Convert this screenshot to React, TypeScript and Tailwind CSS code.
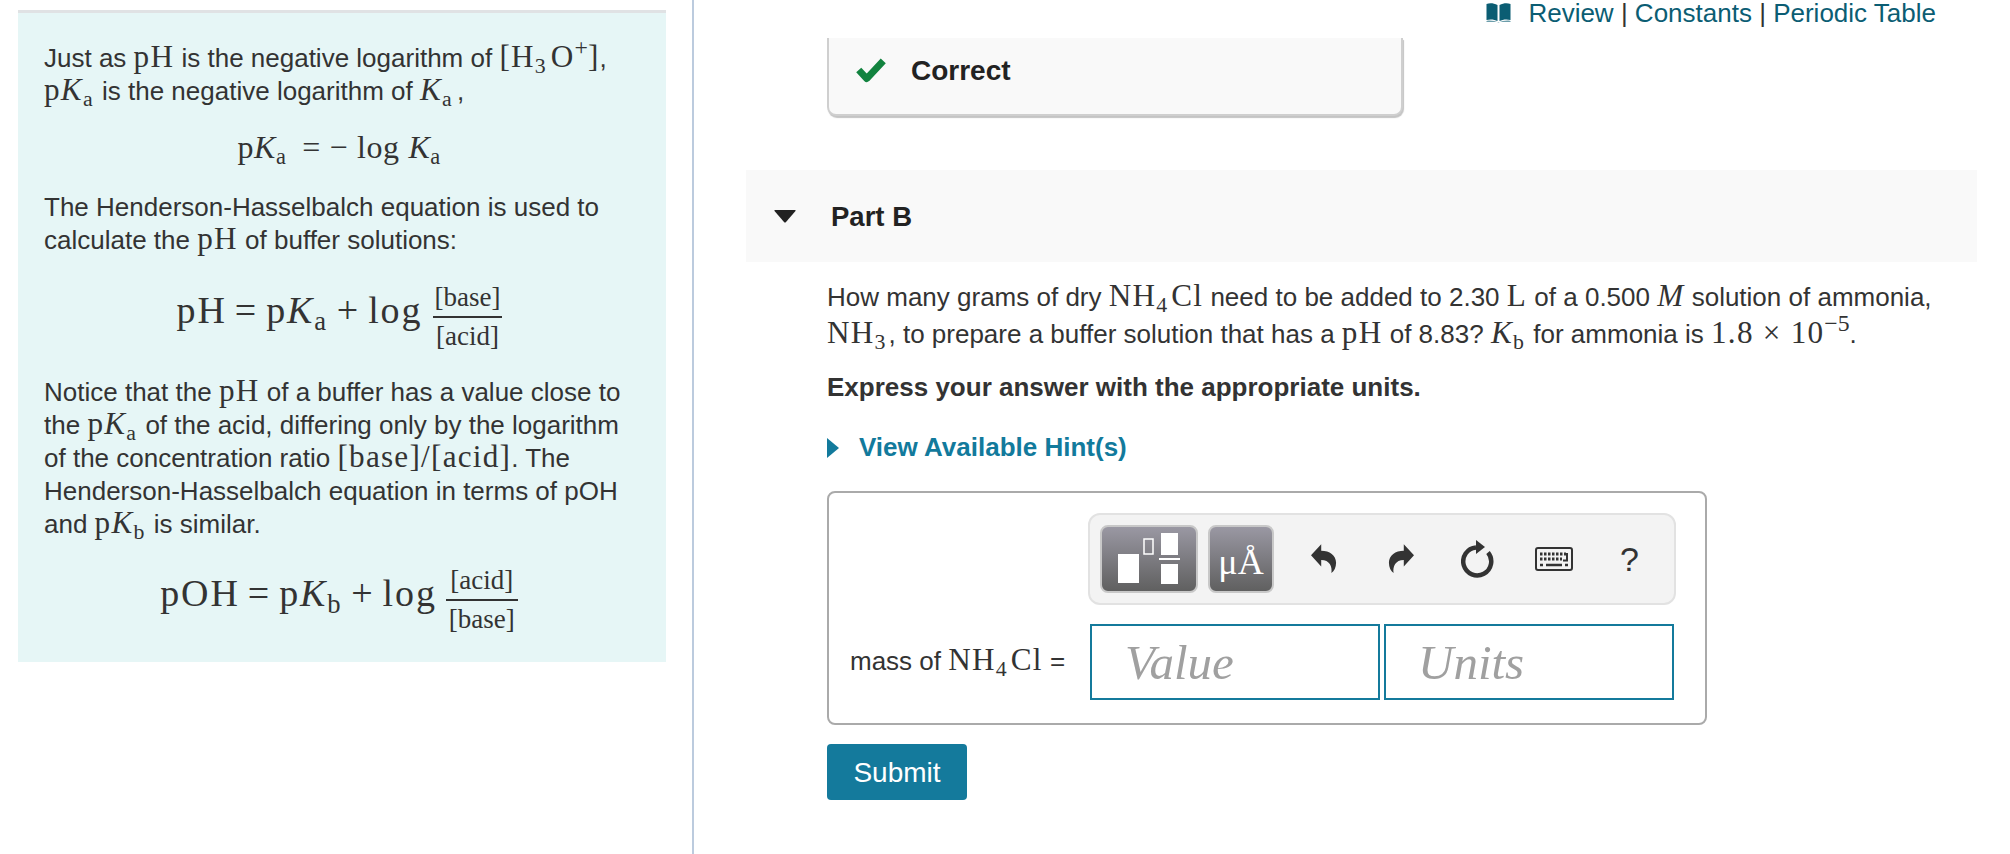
import React from "react";

const Sub = ({ children }: { children: React.ReactNode }) => (
  <span className="relative top-[0.26em] text-[0.7em] leading-none tracking-normal">{children}</span>
);
const Sup = ({ children }: { children: React.ReactNode }) => (
  <span className="relative -top-[0.5em] text-[0.76em] leading-none tracking-normal">{children}</span>
);
const M = ({ children }: { children: React.ReactNode }) => (
  <span className="font-['Liberation_Serif',serif] text-[1.2em] tracking-[0.04em] leading-[0.8]">{children}</span>
);
const K = ({ s }: { s: string }) => (
  <>
    <i className="font-medium">K</i>
    <span className="relative top-[0.26em] text-[0.7em] leading-none tracking-normal mr-[0.1em]">{s}</span>
  </>
);
const Frac = ({ a, b }: { a: string; b: string }) => (
  <span className="inline-flex flex-col items-center text-[27px] leading-[30px] ml-[9px] tracking-normal">
    <span className="px-[3px] pb-[4px]">{a}</span>
    <span className="px-[3px] pt-[3px] border-t-2 border-[#333]">{b}</span>
  </span>
);
const Op = ({ children }: { children: React.ReactNode }) => <span className="mx-[8px]">{children}</span>;

const Book = () => (
  <svg width="25" height="20" viewBox="0 0 24 20" fill="#0b5d73">
    <path d="M0 1c3-1 7-1 11 1v16c-3-1.500-7-2-11-1zM24 1c-3-1-7-1-11 1v16c3-1.500 7-2 11-1z" />
    <path d="M0 18c4-1 8 0 12 1.500 4-1.500 8-2.500 12-1.500v1H0z" opacity=".6" />
  </svg>
);
const Arrow = ({ flip }: { flip?: boolean }) => (
  <svg width="28" height="32" viewBox="0 0 28 32" fill="#333" className={flip ? "-scale-x-100" : ""}>
    <path d="M0 12 11 0V7C20 7 27 12 27 20 27 25 25 29 22 31 23 24 20 17 11 17V24Z" />
  </svg>
);
const Reset = () => (
  <svg width="34" height="38" viewBox="0 0 34 38" fill="none">
    <path d="M15 7.500A14 14 0 1 0 27 12.500" stroke="#333" strokeWidth="4.500" />
    <path d="M15 0 24 7 15 14Z" fill="#333" />
  </svg>
);
const Keyboard = () => (
  <svg width="38" height="24" viewBox="0 0 38 24" fill="none">
    <rect x="1" y="1" width="36" height="22" rx="2" stroke="#333" strokeWidth="2" />
    <path d="M5 7h26M5 12h22" stroke="#333" strokeWidth="3" strokeDasharray="2.500 1.500" />
    <path d="M32 6v7.500h-4" stroke="#333" strokeWidth="2" />
    <path d="M5 18h3M11 18h16M30 18h3" stroke="#333" strokeWidth="2.500" />
  </svg>
);

export default function App() {
  return (
    <div className="flex w-[2010px] h-[854px] overflow-hidden bg-white text-[#333] font-['Liberation_Sans',Arial,sans-serif] text-[26px] leading-[33px]">
      {/* left column */}
      <div className="w-[694px] shrink-0 border-r-2 border-[#bccbde] pl-[18px] pt-[10px]">
        <div className="w-[648px] h-[652px] bg-[#e6f6f6] border-t-[3px] border-[#e0e2e4] px-[26px] pt-[29px]">
          <p className="whitespace-nowrap">
            Just as <M>pH</M> is the negative logarithm of <M>[H<Sub>3</Sub><span className="ml-[5px]">O</span><Sup>+</Sup>]</M>,<br />
            <M>p<K s="a" /></M> is the negative logarithm of <M><K s="a" /></M><span className="ml-[3px]">,</span>
          </p>
          <div className="text-center text-[32px] tracking-[0.02em] leading-[33px] mt-[23px] font-['Liberation_Serif',serif] pr-[4px]">
            p<K s="a" /><span className="ml-[14px]">=</span> − log <K s="a" />
          </div>
          <p className="mt-[27px] whitespace-nowrap">
            The Henderson-Hasselbalch equation is used to<br />
            calculate the <M>pH</M> of buffer solutions:
          </p>
          <div className="flex items-center justify-center h-[70px] text-[38px] tracking-[0.05em] mt-[24px] font-['Liberation_Serif',serif] pr-[4px]">
            <span className="pb-[10px] whitespace-nowrap">pH<Op>=</Op>p<K s="a" /><Op>+</Op>log</span>
            <Frac a="[base]" b="[acid]" />
          </div>
          <p className="mt-[25px] whitespace-nowrap">
            Notice that the <M>pH</M> of a buffer has a value close to<br />
            the <M>p<K s="a" /></M> of the acid, differing only by the logarithm<br />
            of the concentration ratio <M>[base]/[acid]</M>. The<br />
            Henderson-Hasselbalch equation in terms of pOH<br />
            and <M>p<K s="b" /></M> is similar.
          </p>
          <div className="flex items-center justify-center h-[70px] text-[38px] tracking-[0.05em] mt-[23px] font-['Liberation_Serif',serif] pr-[6px]">
            <span className="pb-[10px] whitespace-nowrap">pOH<Op>=</Op>p<K s="b" /><Op>+</Op>log</span>
            <Frac a="[acid]" b="[base]" />
          </div>
        </div>
      </div>

      {/* right column */}
      <div className="flex-1 pl-[52px] pr-[33px]">
        <div className="h-[38px] flex justify-end items-start gap-[17px] pr-[41px] text-[#0b5d73] leading-[26px]">
          <span className="mt-[3px]"><Book /></span>
          <span>
            Review <span className="text-[#333]">|</span> Constants <span className="text-[#333]">|</span> Periodic Table
          </span>
        </div>

        <div className="ml-[81px] w-[576px] h-[78px] bg-[#f9f9f9] border-x-2 border-b-2 border-[#cfcfcf] rounded-b-[9px] shadow-[1px_2px_1px_#c4c4c4] flex items-center pl-[26px] gap-[24px] font-bold text-[#222] text-[28px] pb-[12px]">
          <svg width="32" height="26" viewBox="0 0 30 24" fill="none">
            <path d="M3.500 12 11 20 26.500 3.500" stroke="#12833f" strokeWidth="6.500" strokeLinejoin="round" />
          </svg>
          Correct
        </div>

        <div className="mt-[54px] h-[92px] bg-[#f9f9f9] flex items-center pl-[28px] gap-[35px] font-bold text-[#222] text-[27.500px]">
          <svg width="22" height="13" viewBox="0 0 22 13" fill="#222"><path d="M1 0h20q1 0 .5 1L12 12q-1 1-2 0L.5 1Q0 0 1 0z" /></svg>
          Part B
        </div>

        <div className="ml-[81px] w-[890px]">
          <p className="mt-[17px] leading-[37px] whitespace-nowrap">
            How many grams of dry <M>NH<Sub>4</Sub><span className="ml-[4px]">Cl</span></M> need to be added to 2.30 <M>L</M> of a 0.500 <M><i>M</i></M> solution of ammonia,<br />
            <M>NH<Sub>3</Sub></M><span className="ml-[3px]">,</span> to prepare a buffer solution that has a <M>pH</M> of 8.83? <M><K s="b" /></M> for ammonia is <M>1.8 × 10<Sup>−5</Sup></M>.
          </p>
          <p className="mt-[18px] font-bold">Express your answer with the appropriate units.</p>
          <div className="mt-[27px] flex items-center font-bold text-[#127a9c]">
            <svg width="12" height="20" viewBox="0 0 12 20" fill="#127a9c"><path d="M0 0l12 10L0 20z" /></svg>
            <span className="ml-[20px]">View Available Hint(s)</span>
          </div>

          <div className="mt-[27px] w-[880px] h-[234px] border-2 border-[#aaaaaa] rounded-[8px] flex flex-col items-end pr-[31px] pt-[20px] relative">
            <div className="w-[588px] -mr-[2px] h-[92px] bg-[#f3f3f3] border-2 border-[#e2e2e2] rounded-[12px] flex items-center pl-[10px]">
              <div className="w-[98px] h-[68px] rounded-[8px] border-2 border-[#c8c8c8] bg-gradient-to-b from-[#9a98a3] to-[#606060] flex items-center justify-center">
                <svg width="62" height="52" viewBox="0 0 62 52">
                  <rect x="0" y="21" width="21" height="29" fill="#fff" />
                  <rect x="26" y="6" width="9" height="15" fill="none" stroke="#fff" strokeWidth="1.500" />
                  <rect x="43" y="0" width="17" height="22" fill="#fff" />
                  <rect x="41" y="25" width="21" height="2" fill="#fff" />
                  <rect x="43" y="31" width="17" height="20" fill="#fff" />
                </svg>
              </div>
              <div className="ml-[10px] w-[66px] h-[68px] rounded-[8px] border-2 border-[#c8c8c8] bg-gradient-to-b from-[#9a98a3] to-[#606060] flex items-end justify-center text-white font-['Liberation_Serif',serif] text-[36px] leading-[52px] pb-[3px]">
                μÅ
              </div>
              <div className="flex items-center flex-1 text-[34px]">
                <span className="w-[26px] ml-[37px] flex justify-center"><Arrow /></span>
                <span className="w-[26px] ml-[51px] flex justify-center"><Arrow flip /></span>
                <span className="w-[34px] ml-[47px] flex justify-center"><Reset /></span>
                <span className="w-[38px] ml-[40px] flex justify-center"><Keyboard /></span>
                <span className="ml-[47px] font-normal">?</span>
              </div>
            </div>
            <div className="flex gap-[4px] mt-[19px] font-['Liberation_Serif',serif] italic text-[49px] text-[#a0a0a0]">
              <div className="w-[290px] h-[76px] border-2 border-[#147a9c] flex items-center pl-[33px]">Value</div>
              <div className="w-[290px] h-[76px] border-2 border-[#147a9c] flex items-center pl-[32px]">Units</div>
            </div>
            <span className="absolute left-[21px] top-[152px] whitespace-nowrap">mass of <M>NH<Sub>4</Sub><span className="ml-[4px]">Cl</span></M> =</span>
          </div>

          <button className="mt-[19px] w-[140px] h-[56px] rounded-[4px] bg-[#147a9c] text-white text-[28px]">Submit</button>
        </div>
      </div>
    </div>
  );
}
